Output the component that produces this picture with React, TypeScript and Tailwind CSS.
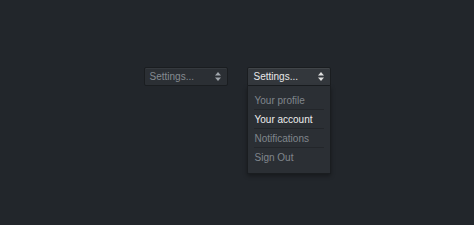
import React from 'react';

function Arrows({ className }: { className?: string }) {
  return (
    <svg width="6" height="9" viewBox="0 0 6 9" className={className}>
      <path d="M3 0 L6 3.5 H0 Z" fill="currentColor" />
      <path d="M3 9 L6 5.5 H0 Z" fill="currentColor" />
    </svg>
  );
}

const items = ['Your profile', 'Your account', 'Notifications', 'Sign Out'];

export default function App() {
  return (
    <div
      className="w-[474px] h-[225px] bg-[#22262b] flex justify-center pt-[67px] gap-[19px]"
      style={{ fontFamily: '"Liberation Sans", Arial, sans-serif' }}
    >
      {/* closed select */}
      <div className="w-[84px] h-[19px] bg-[#2b2f34] border border-[#1a1d20] rounded-[2px] shadow-[inset_0_1px_0_rgba(255,255,255,0.05)] flex items-center justify-between pl-[5px] pr-[6px] text-[10px] text-[#858b91]">
        <span>Settings...</span>
        <Arrows className="text-[#a0a6ac]" />
      </div>

      {/* open select */}
      <div className="w-[84px] flex flex-col">
        <div className="h-[19px] bg-[#33373c] border border-[#1a1d20] rounded-t-[2px] shadow-[inset_0_1px_0_rgba(255,255,255,0.07)] flex items-center justify-between pl-[6px] pr-[6px] text-[10px] text-[#e8e8e8]">
          <span>Settings...</span>
          <Arrows className="text-[#e0e0e0]" />
        </div>
        <div className="bg-[#2b2f34] border border-t-0 border-[#1a1d20] rounded-b-[2px] shadow-[0_2px_4px_rgba(0,0,0,0.35)] pt-[5px] pb-[6px] px-[6px]">
          {items.map((label, i) => (
            <div
              key={label}
              className={
                'h-[19px] flex items-center pl-[1px] text-[10px] ' +
                (i < items.length - 1 ? 'border-b border-[#23262a] ' : '') +
                (label === 'Your account' ? 'text-[#eeeeee]' : 'text-[#80868c]')
              }
            >
              {label}
            </div>
          ))}
        </div>
      </div>
    </div>
  );
}
